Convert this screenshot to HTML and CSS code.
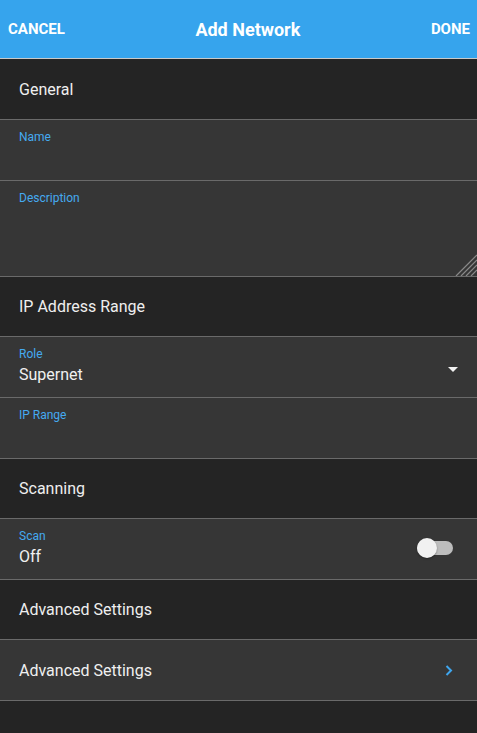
FILE: index.html
```html
<!DOCTYPE html>
<html>
<head>
<meta charset="utf-8">
<link rel="stylesheet" href="styles.css">
</head>
<body>
<div class="app">
  <header class="topbar">
    <span class="action">CANCEL</span>
    <span class="title">Add Network</span>
    <span class="action">DONE</span>
  </header>

  <div class="section first">General</div>
  <div class="field">
    <div class="label">Name</div>
  </div>
  <div class="field textarea">
    <div class="label">Description</div>
    <svg class="grip" width="22" height="22" viewBox="0 0 22 22">
      <line x1="22" y1="1" x2="1" y2="22" stroke="#8a8a8a" stroke-width="1.2"/>
      <line x1="22" y1="6" x2="6" y2="22" stroke="#8a8a8a" stroke-width="1.2"/>
      <line x1="22" y1="11" x2="11" y2="22" stroke="#8a8a8a" stroke-width="1.2"/>
      <line x1="22" y1="16" x2="16" y2="22" stroke="#8a8a8a" stroke-width="1.2"/>
    </svg>
  </div>

  <div class="section">IP Address Range</div>
  <div class="field row">
    <div class="stack">
      <div class="label">Role</div>
      <div class="value">Supernet</div>
    </div>
    <svg class="caret" width="10" height="5" viewBox="0 0 10 5"><path d="M0 0 L10 0 L5 5 Z" fill="#f2f2f2"/></svg>
  </div>
  <div class="field">
    <div class="label">IP Range</div>
  </div>

  <div class="section">Scanning</div>
  <div class="field row">
    <div class="stack">
      <div class="label">Scan</div>
      <div class="value">Off</div>
    </div>
    <div class="toggle"><span class="thumb"></span></div>
  </div>

  <div class="section">Advanced Settings</div>
  <div class="field row">
    <div class="value">Advanced Settings</div>
    <svg class="chev" width="8" height="11" viewBox="0 0 8 11"><path d="M1.5 1 L6 5.5 L1.5 10" fill="none" stroke="#3ea6ee" stroke-width="2"/></svg>
  </div>
</div>
</body>
</html>
```

FILE: styles.css
```css
html, body {
  margin: 0;
  padding: 0;
  background: #242424;
  font-family: Roboto, "Liberation Sans", sans-serif;
  color: #f0f0f0;
}
.app {
  width: 477px;
  min-height: 733px;
  background: #242424;
  display: flex;
  flex-direction: column;
}
.topbar {
  height: 58px;
  background: #36a4ed;
  border-bottom: 1px solid #c9c9c9;
  display: flex;
  align-items: center;
  justify-content: space-between;
  padding: 0 7px 0 8px;
  color: #ffffff;
}
.action {
  font-size: 15px;
  font-weight: 700;
}
.title {
  font-size: 18px;
  font-weight: 700;
}
.section {
  height: 59px;
  display: flex;
  align-items: center;
  padding-left: 19px;
  font-size: 16px;
  color: #efefef;
  background: #242424;
  border-bottom: 1px solid #6a6a6a;
}
.section.first {
  height: 60px;
}
.field {
  background: #363636;
  border-bottom: 1px solid #6a6a6a;
  padding: 10px 19px 0;
  box-sizing: border-box;
  height: 61px;
  position: relative;
}
.field.textarea {
  height: 96px;
}
.label {
  font-size: 12px;
  line-height: 14px;
  color: #45aaf0;
}
.value {
  font-size: 16px;
  line-height: 19px;
  color: #f0f0f0;
}
.row {
  display: flex;
  align-items: center;
  justify-content: space-between;
  padding-top: 0;
  padding-right: 24px;
}
.stack {
  display: flex;
  flex-direction: column;
  align-self: flex-start;
  padding-top: 10px;
}
.stack .value {
  margin-top: 4px;
}
.grip {
  position: absolute;
  right: 0;
  bottom: 0;
}
.caret {
  margin-right: -5px;
  margin-top: 5px;
}
.toggle {
  position: relative;
  width: 36px;
  height: 14px;
  border-radius: 7px;
  background: #bdbdbd;
  margin-top: -2px;
}
.thumb {
  position: absolute;
  left: 0;
  top: -3px;
  width: 20px;
  height: 20px;
  border-radius: 50%;
  background: #f1f1f1;
  box-shadow: 0 1px 2px rgba(0,0,0,0.35);
}
```
